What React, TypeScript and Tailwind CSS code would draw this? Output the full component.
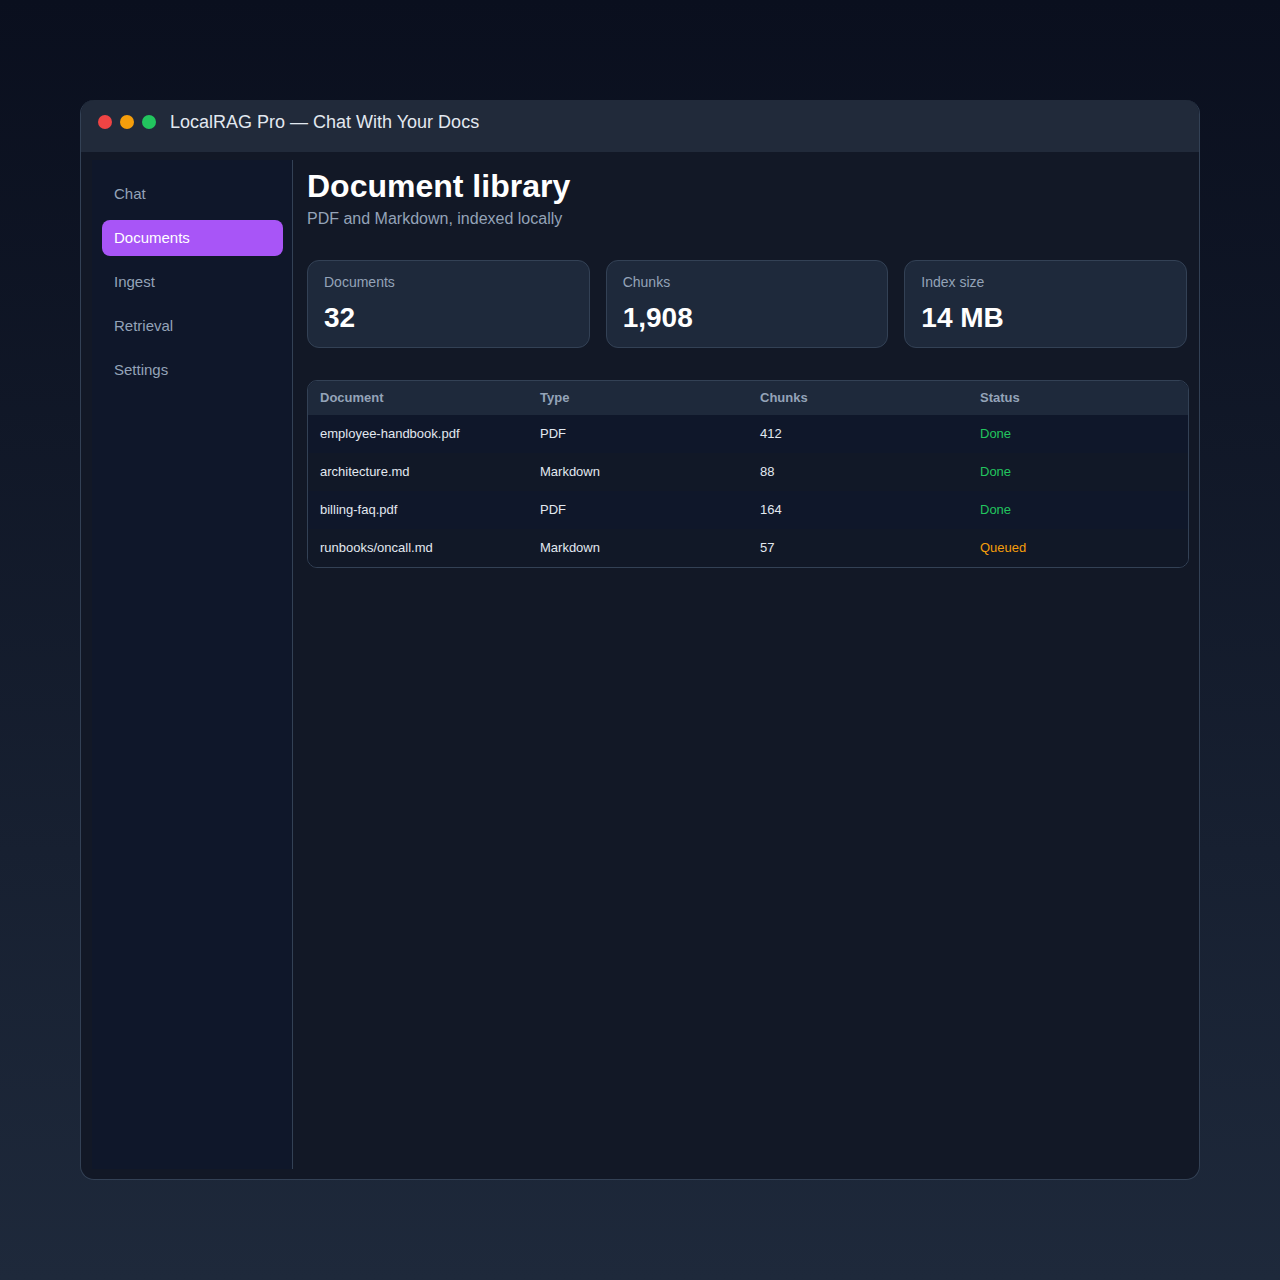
const NAV = ['Chat', 'Documents', 'Ingest', 'Retrieval', 'Settings'];

const STATS = [
  { label: 'Documents', value: '32' },
  { label: 'Chunks', value: '1,908' },
  { label: 'Index size', value: '14 MB' },
];

const ROWS = [
  { name: 'employee-handbook.pdf', type: 'PDF', chunks: '412', status: 'Done' },
  { name: 'architecture.md', type: 'Markdown', chunks: '88', status: 'Done' },
  { name: 'billing-faq.pdf', type: 'PDF', chunks: '164', status: 'Done' },
  { name: 'runbooks/oncall.md', type: 'Markdown', chunks: '57', status: 'Queued' },
];

export default function App() {
  return (
    <div
      className="min-h-[1280px] w-full bg-gradient-to-b from-[#0a0f1e] to-[#1e293b] pt-[100px] px-[80px]"
      style={{ fontFamily: '"Liberation Sans", Arial, sans-serif' }}
    >
      {/* Window */}
      <div className="h-[1080px] flex flex-col rounded-[14px] border border-[#334155] border-t-0 bg-[#121826] overflow-hidden">
        {/* Title bar */}
        <div className="h-[52px] shrink-0 flex items-center bg-[#212a3a] pl-[17px] pb-2">
          <div className="flex gap-2">
            <span className="w-[14px] h-[14px] rounded-full bg-[#ef4444]" />
            <span className="w-[14px] h-[14px] rounded-full bg-[#f59e0b]" />
            <span className="w-[14px] h-[14px] rounded-full bg-[#22c55e]" />
          </div>
          <span className="ml-[14px] text-[18px] text-[#e2e8f0]">LocalRAG Pro — Chat With Your Docs</span>
        </div>

        {/* Body */}
        <div className="flex-1 flex pt-2 pb-[10px] pl-[11px] min-h-0">
          {/* Sidebar */}
          <aside className="w-[201px] shrink-0 bg-[#0f172a] border-r border-[#334155] pt-4 pl-[10px] pr-[9px] flex flex-col gap-2">
            {NAV.map((item) => (
              <div
                key={item}
                className={
                  item === 'Documents'
                    ? 'h-9 flex items-center px-3 rounded-lg bg-[#a855f7] text-[15px] text-white'
                    : 'h-9 flex items-center px-3 rounded-lg text-[15px] text-[#94a3b8]'
                }
              >
                {item}
              </div>
            ))}
          </aside>

          {/* Main */}
          <main className="flex-1 pl-[14px] pr-[10px] pt-[7px]">
            <h1 className="text-[32px] leading-[38px] font-bold text-white">Document library</h1>
            <p className="mt-[2px] text-base leading-6 text-[#94a3b8]">PDF and Markdown, indexed locally</p>

            <div className="mt-[29px] mr-[2px] grid grid-cols-3 gap-4">
              {STATS.map((s) => (
                <div key={s.label} className="h-[88px] rounded-xl border border-[#334155] bg-[#1e293b] px-4 pt-[11px]">
                  <div className="text-sm leading-5 text-[#94a3b8]">{s.label}</div>
                  <div className="mt-[9px] text-[28px] leading-[34px] font-bold text-white">{s.value}</div>
                </div>
              ))}
            </div>

            <div className="mt-8 rounded-[10px] border border-[#334155] overflow-hidden bg-[#0f172a]">
              <div className="grid grid-cols-4 h-[34px] items-center bg-[#1e293b] text-[13px] font-bold text-[#94a3b8]">
                <div className="px-3">Document</div>
                <div className="px-3">Type</div>
                <div className="px-3">Chunks</div>
                <div className="px-3">Status</div>
              </div>
              {ROWS.map((r, i) => (
                <div
                  key={r.name}
                  className={
                    i % 2 === 1
                      ? 'grid grid-cols-4 h-[38px] items-center text-[13px] text-[#e2e8f0] bg-[#111827]'
                      : 'grid grid-cols-4 h-[38px] items-center text-[13px] text-[#e2e8f0]'
                  }
                >
                  <div className="px-3">{r.name}</div>
                  <div className="px-3">{r.type}</div>
                  <div className="px-3">{r.chunks}</div>
                  <div className={r.status === 'Done' ? 'px-3 text-[#22c55e]' : 'px-3 text-[#f59e0b]'}>{r.status}</div>
                </div>
              ))}
            </div>
          </main>
        </div>
      </div>
    </div>
  );
}
